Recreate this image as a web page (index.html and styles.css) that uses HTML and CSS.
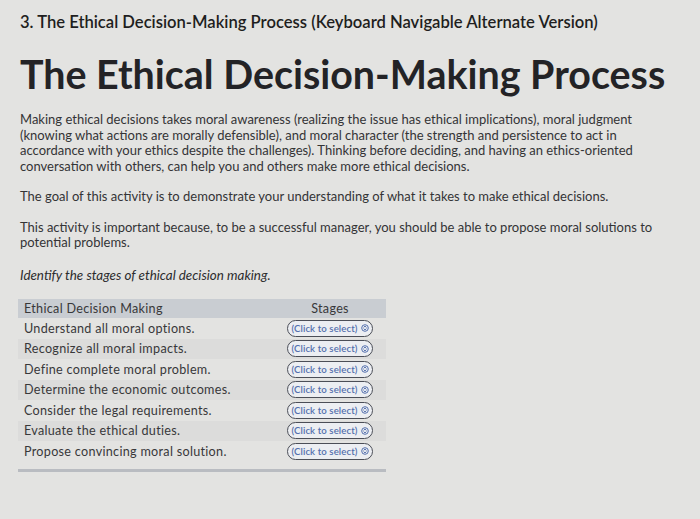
FILE: index.html
```html
<!DOCTYPE html>
<html>
	<head>
		<meta charset="utf-8">
		<title>The Ethical Decision-Making Process</title>
		<link rel="stylesheet" href="styles.css">
	</head>
	<body>
	<div class="page">
		<h2 class="q_title">3. The Ethical Decision-Making Process (Keyboard Navigable Alternate Version)</h2>
		<h1 class="main_title">The Ethical Decision-Making Process</h1>
		<p>Making ethical decisions takes moral awareness (realizing the issue has ethical implications), moral judgment (knowing what actions are morally defensible), and moral character (the strength and persistence to act in accordance with your ethics despite the challenges). Thinking before deciding, and having an ethics-oriented conversation with others, can help you and others make more ethical decisions.</p>
		<p>The goal of this activity is to demonstrate your understanding of what it takes to make ethical decisions.</p>
		<p>This activity is important because, to be a successful manager, you should be able to propose moral solutions to potential problems.</p>
		<p class="ask">Identify the stages of ethical decision making.</p>
		<table class="stages">
			<thead>
				<tr><th class="c1">Ethical Decision Making</th><th class="c2">Stages</th></tr>
			</thead>
			<tbody>
				<tr><td>Understand all moral options.</td><td class="sel"><span class="pick">(Click to select)<svg viewBox="0 0 8 8"><circle cx="4" cy="4" r="3.3"/><path d="M2.6 3.4 4 2.1 5.4 3.4M2.6 4.6 4 5.9 5.4 4.6"/></svg></span></td></tr>
				<tr class="odd"><td>Recognize all moral impacts.</td><td class="sel"><span class="pick">(Click to select)<svg viewBox="0 0 8 8"><circle cx="4" cy="4" r="3.3"/><path d="M2.6 3.4 4 2.1 5.4 3.4M2.6 4.6 4 5.9 5.4 4.6"/></svg></span></td></tr>
				<tr><td>Define complete moral problem.</td><td class="sel"><span class="pick">(Click to select)<svg viewBox="0 0 8 8"><circle cx="4" cy="4" r="3.3"/><path d="M2.6 3.4 4 2.1 5.4 3.4M2.6 4.6 4 5.9 5.4 4.6"/></svg></span></td></tr>
				<tr class="odd"><td>Determine the economic outcomes.</td><td class="sel"><span class="pick">(Click to select)<svg viewBox="0 0 8 8"><circle cx="4" cy="4" r="3.3"/><path d="M2.6 3.4 4 2.1 5.4 3.4M2.6 4.6 4 5.9 5.4 4.6"/></svg></span></td></tr>
				<tr><td>Consider the legal requirements.</td><td class="sel"><span class="pick">(Click to select)<svg viewBox="0 0 8 8"><circle cx="4" cy="4" r="3.3"/><path d="M2.6 3.4 4 2.1 5.4 3.4M2.6 4.6 4 5.9 5.4 4.6"/></svg></span></td></tr>
				<tr class="odd"><td>Evaluate the ethical duties.</td><td class="sel"><span class="pick">(Click to select)<svg viewBox="0 0 8 8"><circle cx="4" cy="4" r="3.3"/><path d="M2.6 3.4 4 2.1 5.4 3.4M2.6 4.6 4 5.9 5.4 4.6"/></svg></span></td></tr>
				<tr class="last"><td>Propose convincing moral solution.</td><td class="sel"><span class="pick">(Click to select)<svg viewBox="0 0 8 8"><circle cx="4" cy="4" r="3.3"/><path d="M2.6 3.4 4 2.1 5.4 3.4M2.6 4.6 4 5.9 5.4 4.6"/></svg></span></td></tr>
			</tbody>
		</table>
	</div>
	</body>
</html>
```
FILE: styles.css
```css
*{margin:0px;padding:0px;}
body{background:#e3e3e1;font-family:"Lato","Liberation Sans",sans-serif;color:#2a2a2c;}
.page{padding:12px 20px 0 20px;}
.q_title{font-size:16.6px;font-weight:600;color:#1e1e20;line-height:20px;}
.main_title{font-size:39.4px;font-weight:700;color:#232326;margin-top:20px;line-height:44px;}
p{font-size:13px;line-height:15.5px;margin-top:15px;color:#343436;padding-right:8px;}
.main_title + p{margin-top:16px;}
p.ask{font-style:italic;font-weight:400;font-size:13.4px;margin-top:17px;color:#2c2c2e;}
.stages{border-collapse:collapse;width:368px;margin:16px 0 0 -2px;border-bottom:3px solid #b9bcc1;font-size:12.6px;letter-spacing:0.3px;color:#38383a;}
.stages th{background:#c9cdd2;font-weight:400;height:19px;padding:0 6px;}
.stages th.c1{text-align:left;}
.stages th.c2{text-align:center;width:100px;}
.stages td{height:20.5px;padding:0 6px;}
.stages tr.odd td{background:#dcdcdb;}
.stages tr.last td{padding-bottom:7px;}
.stages td.sel{text-align:center;}
.pick{display:inline-flex;align-items:center;height:15px;padding:0 3px 0 4px;border:1.5px solid #4b4e57;border-radius:9px;font-size:9.6px;letter-spacing:0.1px;color:#5470ad;font-weight:600;background:#eceef2;}
.pick svg{width:8px;height:8px;margin-left:4px;fill:none;stroke:#5470ad;stroke-width:1;}
```
